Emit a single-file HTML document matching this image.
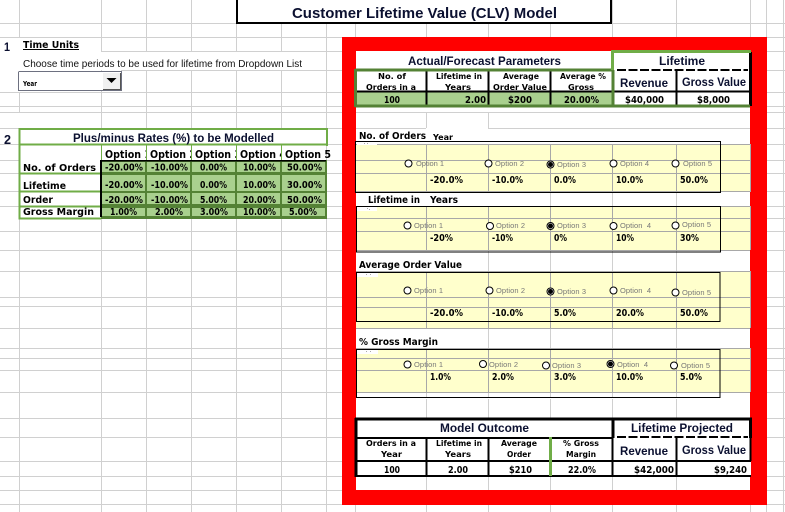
<!DOCTYPE html>
<html><head><meta charset="utf-8"><style>
html,body{margin:0;padding:0;background:#fff}
svg{display:block}
text{white-space:pre}
.t{font-family:"Liberation Sans",sans-serif;font-weight:bold;fill:#0b1030}
.b{font-family:"DejaVu Sans",sans-serif;font-weight:bold;fill:#000;font-size:9px}
.h{font-family:"DejaVu Sans",sans-serif;font-weight:bold;fill:#000;font-size:8px}
.o{font-family:"Liberation Sans",sans-serif;fill:#777;font-size:7.5px}
.g{stroke:#d0d0d0;stroke-width:1;shape-rendering:crispEdges;fill:none}
.y{stroke:#a8a8a8;stroke-width:1;shape-rendering:crispEdges;fill:none}
.r{fill:#fff;stroke:#000;stroke-width:1}
</style></head><body>
<svg xmlns="http://www.w3.org/2000/svg" width="785" height="512" viewBox="0 0 785 512">
<rect width="785" height="512" fill="#fff"/>
<!-- grid -->
<path class="g" d="M0 23.5H785M0 37.5H785M101 51.5H785M121 70.5H785M0 92.5H785M0 106.5H785M0 112.5H785M0 128.5H785M0 144.5H785M0 160.5H785M0 173.5H785M0 191.5H785M0 206.5H785M327 218.5H785M0 231.5H785M0 250.5H785M0 271.5H785M0 297.5H785M0 306.5H785M0 328.5H785M0 348.5H785M0 358.5H785M0 370.5H785M0 392.5H785M0 418.5H785M0 437.5H785M0 461.5H785M0 476.5H785M0 490.5H785M0 504.5H785"/>
<path class="g" d="M19.5 0V37M19.5 92V112M19.5 128V512M101.5 0V512M146.5 0V512M191.5 0V512M236.5 0V512M281.5 0V512M326.5 0V512M355.5 0V512M426.5 0V512M488.5 0V512M550.5 0V512M612.5 0V512M676.5 0V512M750.5 0V512M766.5 0V512M783.5 0V512"/>
<rect x="0" y="38" width="101" height="13" fill="#fff"/>
<rect x="0" y="51" width="19" height="19" fill="#fff"/>
<rect x="0" y="71" width="19" height="21" fill="#fff"/>
<rect x="0" y="113" width="340" height="15" fill="#fff"/>
<path class="g" d="M101.500 113V128M146.500 113V128M191.500 113V128M236.500 113V128M281.500 113V128M326.500 113V128"/>
<rect x="0" y="113" width="19" height="15" fill="#fff"/>
<rect x="20" y="52" width="290" height="18" fill="#fff"/>
<!-- title -->
<rect x="236" y="0" width="376" height="23" fill="#fff"/>
<path d="M237 0V23H611V0" fill="none" stroke="#000" stroke-width="2" shape-rendering="crispEdges"/>
<text class="t" x="292" y="18" font-size="15" textLength="265" lengthAdjust="spacingAndGlyphs">Customer Lifetime Value (CLV) Model</text>
<!-- left top -->
<text class="t" x="4" y="51" font-size="12" textLength="6" lengthAdjust="spacingAndGlyphs">1</text>
<text class="b" x="23" y="48" textLength="56" lengthAdjust="spacingAndGlyphs" style="font-size:10px;text-decoration:underline">Time Units</text>
<text x="23" y="67" font-family="'Liberation Sans',sans-serif" font-size="10" textLength="279" lengthAdjust="spacingAndGlyphs" fill="#111">Choose time periods to be used for lifetime from Dropdown List</text>
<rect x="19" y="72" width="102" height="18" fill="#fff"/>
<path d="M19 71.500H121.500V90.500H18.500V71.500" fill="none" stroke="#6d7080" stroke-width="1" shape-rendering="crispEdges"/>
<rect x="103" y="73" width="17" height="16" fill="#f0f0f0"/>
<path d="M103 89.500H120.500V73" fill="none" stroke="#555" shape-rendering="crispEdges"/>
<path d="M106.500 78H116.500L111.500 83Z" fill="#000"/>
<text class="h" x="23" y="86" textLength="14" lengthAdjust="spacingAndGlyphs" style="font-size:7px">Year</text>
<!-- left table -->
<text class="t" x="4" y="144" font-size="13" textLength="7" lengthAdjust="spacingAndGlyphs">2</text>
<rect x="20" y="130" width="306" height="88" fill="#fff"/>
<rect x="101" y="160" width="226" height="59" fill="#548235"/>
<g fill="#a9d08e"><rect x="102" y="162" width="43" height="10"/><rect x="147" y="162" width="43" height="10"/><rect x="192" y="162" width="43" height="10"/><rect x="237" y="162" width="43" height="10"/><rect x="282" y="162" width="43" height="10"/>
<rect x="102" y="175" width="43" height="16"/><rect x="147" y="175" width="43" height="16"/><rect x="192" y="175" width="43" height="16"/><rect x="237" y="175" width="43" height="16"/><rect x="282" y="175" width="43" height="16"/>
<rect x="102" y="193" width="43" height="11"/><rect x="147" y="193" width="43" height="11"/><rect x="192" y="193" width="43" height="11"/><rect x="237" y="193" width="43" height="11"/><rect x="282" y="193" width="43" height="11"/>
<rect x="102" y="208" width="43" height="8"/><rect x="147" y="208" width="43" height="8"/><rect x="192" y="208" width="43" height="8"/><rect x="237" y="208" width="43" height="8"/><rect x="282" y="208" width="43" height="8"/></g>
<rect x="100" y="160" width="226" height="1.500" fill="#000"/>
<rect x="100" y="160" width="2" height="57" fill="#000"/>
<path d="M327 146V129H19.500V218.500H101M19.500 144.500H327M20 173.500H100M20 191.500H100M20 206.500H100" fill="none" stroke="#70ad47" stroke-width="2" shape-rendering="crispEdges"/>
<path d="M101.500 145V160M146.500 145V160M191.500 145V160M236.500 145V160M281.500 145V160" stroke="#70ad47" stroke-width="1" shape-rendering="crispEdges"/>
<text class="t" x="73" y="142" font-size="11.500" textLength="201" lengthAdjust="spacingAndGlyphs">Plus/minus Rates (%) to be Modelled</text>
<g class="b" style="font-size:10.500px">
<svg x="102" y="146" width="44" height="14"><text x="3" y="12" textLength="46" lengthAdjust="spacingAndGlyphs">Option 1</text></svg>
<svg x="147" y="146" width="44" height="14"><text x="3" y="12" textLength="46" lengthAdjust="spacingAndGlyphs">Option 2</text></svg>
<svg x="192" y="146" width="44" height="14"><text x="3" y="12" textLength="46" lengthAdjust="spacingAndGlyphs">Option 3</text></svg>
<svg x="237" y="146" width="44" height="14"><text x="3" y="12" textLength="46" lengthAdjust="spacingAndGlyphs">Option 4</text></svg>
<text x="285" y="158" textLength="46" lengthAdjust="spacingAndGlyphs">Option 5</text></g>
<g class="b" style="font-size:10px"><text x="23" y="171" textLength="73" lengthAdjust="spacingAndGlyphs">No. of Orders</text><text x="23" y="189" textLength="43" lengthAdjust="spacingAndGlyphs">Lifetime</text><text x="23" y="203" textLength="30" lengthAdjust="spacingAndGlyphs">Order</text><text x="23" y="215" textLength="71" lengthAdjust="spacingAndGlyphs">Gross Margin</text></g>
<g class="b" style="font-size:9.500px">
<text x="105" y="170.500" textLength="38" lengthAdjust="spacingAndGlyphs">-20.00%</text><text x="151" y="170.500" textLength="37" lengthAdjust="spacingAndGlyphs">-10.00%</text><text x="200" y="170.500" textLength="27" lengthAdjust="spacingAndGlyphs">0.00%</text><text x="243" y="170.500" textLength="33" lengthAdjust="spacingAndGlyphs">10.00%</text><text x="287" y="170.500" textLength="35" lengthAdjust="spacingAndGlyphs">50.00%</text>
<text x="105" y="188" textLength="38" lengthAdjust="spacingAndGlyphs">-20.00%</text><text x="151" y="188" textLength="37" lengthAdjust="spacingAndGlyphs">-10.00%</text><text x="200" y="188" textLength="27" lengthAdjust="spacingAndGlyphs">0.00%</text><text x="243" y="188" textLength="33" lengthAdjust="spacingAndGlyphs">10.00%</text><text x="287" y="188" textLength="35" lengthAdjust="spacingAndGlyphs">30.00%</text>
<text x="105" y="203" textLength="38" lengthAdjust="spacingAndGlyphs">-20.00%</text><text x="151" y="203" textLength="37" lengthAdjust="spacingAndGlyphs">-10.00%</text><text x="200" y="203" textLength="27" lengthAdjust="spacingAndGlyphs">5.00%</text><text x="243" y="203" textLength="33" lengthAdjust="spacingAndGlyphs">20.00%</text><text x="287" y="203" textLength="35" lengthAdjust="spacingAndGlyphs">50.00%</text>
<text x="110" y="215" textLength="27" lengthAdjust="spacingAndGlyphs">1.00%</text><text x="155" y="215" textLength="28" lengthAdjust="spacingAndGlyphs">2.00%</text><text x="200" y="215" textLength="28" lengthAdjust="spacingAndGlyphs">3.00%</text><text x="243" y="215" textLength="33" lengthAdjust="spacingAndGlyphs">10.00%</text><text x="289" y="215" textLength="28" lengthAdjust="spacingAndGlyphs">5.00%</text>
</g>
<!-- red frame -->
<path d="M342 37H767V505H342ZM356 51V490H750V51Z" fill="#f00" fill-rule="evenodd"/>
<rect x="356" y="51" width="394" height="61" fill="#fff"/>
<rect x="356" y="113" width="394" height="31" fill="#fff"/>
<rect x="356" y="192" width="394" height="14" fill="#fff"/>
<rect x="356" y="251" width="394" height="20" fill="#fff"/>
<rect x="356" y="329" width="394" height="19" fill="#fff"/>
<rect x="356" y="393" width="394" height="25" fill="#fff"/>
<path class="g" d="M356 112.500H750M356 418.500H750M426.500 112V128M488.500 112V128M356 128.500H426M488 128.500H750
M550.500 192V206M612.500 192V206M676.500 192V206
M488.500 251V271M550.500 251V271M612.500 251V271M676.500 251V271
M488.500 329V348M550.500 329V348M612.500 329V348M676.500 329V348
M426.500 393V418M488.500 393V418M550.500 393V418M612.500 393V418M676.500 393V418"/>
<!-- top table -->
<rect x="355" y="71" width="257" height="35" fill="#fff"/>
<rect x="356" y="92" width="256" height="13" fill="#a9d08e"/>
<path d="M355 91.500H750" stroke="#000" stroke-width="2" shape-rendering="crispEdges"/>
<path d="M426.500 71V105M488.500 71V105M550.500 71V105M676.500 71V105" stroke="#000" stroke-width="2" shape-rendering="crispEdges"/>
<path d="M750.500 52V106" stroke="#000" stroke-width="3" shape-rendering="crispEdges"/>
<path d="M355.500 70H613M355.500 106H750M355.500 69V107M613 70V106" fill="none" stroke="#548235" stroke-width="3" shape-rendering="crispEdges"/>
<path d="M612.500 70V51.500H751" fill="none" stroke="#70ad47" stroke-width="3" shape-rendering="crispEdges"/>
<path d="M617 70H748" stroke="#000" stroke-width="2" stroke-dasharray="9 2.500" shape-rendering="crispEdges"/>
<g class="t" font-size="12"><text x="408" y="65" textLength="153" lengthAdjust="spacingAndGlyphs">Actual/Forecast Parameters</text><text x="659" y="65" textLength="46" lengthAdjust="spacingAndGlyphs">Lifetime</text><text x="620" y="87" textLength="48" lengthAdjust="spacingAndGlyphs">Revenue</text><text x="682" y="86" textLength="64" lengthAdjust="spacingAndGlyphs">Gross Value</text></g>
<g class="h"><text x="378" y="79" textLength="28" lengthAdjust="spacingAndGlyphs">No. of</text><text x="366" y="90" textLength="50" lengthAdjust="spacingAndGlyphs">Orders in a</text><text x="436" y="79" textLength="46" lengthAdjust="spacingAndGlyphs">Lifetime in</text><text x="445" y="90" textLength="26" lengthAdjust="spacingAndGlyphs">Years</text><text x="503" y="79" textLength="36" lengthAdjust="spacingAndGlyphs">Average</text><text x="493" y="90" textLength="54" lengthAdjust="spacingAndGlyphs">Order Value</text><text x="560" y="79" textLength="46" lengthAdjust="spacingAndGlyphs">Average %</text><text x="568" y="90" textLength="26" lengthAdjust="spacingAndGlyphs">Gross</text></g>
<g class="b" style="font-size:9.500px"><text x="384" y="103" textLength="16" lengthAdjust="spacingAndGlyphs">100</text><text x="465" y="103" textLength="21" lengthAdjust="spacingAndGlyphs">2.00</text><text x="508" y="103" textLength="24" lengthAdjust="spacingAndGlyphs">$200</text><text x="564" y="103" textLength="35" lengthAdjust="spacingAndGlyphs">20.00%</text><text x="625" y="103" textLength="39" lengthAdjust="spacingAndGlyphs">$40,000</text><text x="697" y="103" textLength="33" lengthAdjust="spacingAndGlyphs">$8,000</text></g>
<!-- panels -->
<rect x="356" y="144" width="394" height="48" fill="#ffffcc"/>
<rect x="356" y="206" width="394" height="44" fill="#ffffcc"/>
<rect x="356" y="271" width="394" height="57" fill="#ffffcc"/>
<rect x="356" y="348" width="394" height="44" fill="#ffffcc"/>
<path class="y" d="M426.500 144V192M488.500 144V192M550.500 144V192M612.500 144V192M676.500 144V192M750.500 144V192M356 144.500H750M356 160.500H750M356 173.500H750M356 191.500H750
M426.500 206V250M488.500 206V250M550.500 206V250M612.500 206V250M676.500 206V250M750.500 206V250M356 206.500H750M356 218.500H750M356 231.500H750M356 250.500H750
M426.500 271V328M488.500 271V328M550.500 271V328M612.500 271V328M676.500 271V328M750.500 271V328M356 271.500H750M356 297.500H750M356 307.500H750M356 328.500H750
M426.500 348V392M488.500 348V392M550.500 348V392M612.500 348V392M676.500 348V392M750.500 348V392M356 348.500H750M356 358.500H750M356 370.500H750M356 392.500H750"/>
<!-- caption backgrounds -->
<rect x="356" y="113" width="71" height="15" fill="#fff"/>
<path class="g" d="M426.500 112V128"/>
<rect x="357" y="129" width="69" height="12" fill="#fff"/><rect x="427" y="129" width="34" height="12" fill="#fff"/>
<rect x="357" y="193" width="69" height="13" fill="#fff"/><rect x="427" y="193" width="60" height="13" fill="#fff"/>
<rect x="356" y="398" width="365" height="20" fill="#fff"/>
<path class="g" d="M426.500 399V418M488.500 399V418M550.500 399V418M612.500 399V418M676.500 399V418"/>
<!-- panel tabs -->
<g fill="#fff"><rect x="357" y="142" width="20" height="3"/><rect x="357" y="207" width="20" height="4"/><rect x="357" y="273" width="21" height="4"/><rect x="357" y="350" width="21" height="4"/></g>
<g fill="#aaa"><rect x="364" y="143" width="1" height="1"/><rect x="367" y="143" width="1" height="1"/><rect x="367" y="208" width="1" height="1"/><rect x="369" y="209" width="1" height="1"/><rect x="366" y="274" width="1" height="1"/><rect x="370" y="274" width="1" height="1"/><rect x="366" y="351" width="1" height="1"/><rect x="370" y="351" width="1" height="1"/></g>
<g fill="none" stroke="#000" stroke-width="1" shape-rendering="crispEdges"><rect x="355.500" y="141.500" width="365" height="51"/><rect x="356.500" y="206.500" width="364" height="45.500"/><rect x="356.500" y="272.500" width="363.500" height="49"/><rect x="356.500" y="349.500" width="363.500" height="48"/></g>
<g class="b" style="font-size:9.500px"><text x="359" y="139" textLength="67" lengthAdjust="spacingAndGlyphs">No. of Orders</text><text x="368" y="203" textLength="52" lengthAdjust="spacingAndGlyphs">Lifetime in</text><text x="430" y="203" textLength="28" lengthAdjust="spacingAndGlyphs">Years</text><text x="359" y="268" textLength="103" lengthAdjust="spacingAndGlyphs">Average Order Value</text><text x="359" y="345" textLength="79" lengthAdjust="spacingAndGlyphs">% Gross Margin</text></g>
<text class="h" x="433" y="140" textLength="20" lengthAdjust="spacingAndGlyphs">Year</text>
<!-- radios -->
<g class="r"><circle cx="408.500" cy="163.500" r="3.500"/><circle cx="488.500" cy="163.500" r="3.500"/><circle cx="550.500" cy="164.500" r="3.500"/><circle cx="613.500" cy="163.500" r="3.500"/><circle cx="675.500" cy="163.500" r="3.500"/>
<circle cx="407.500" cy="225.500" r="3.500"/><circle cx="490" cy="226" r="3.500"/><circle cx="550.500" cy="226" r="3.500"/><circle cx="613.500" cy="226" r="3.500"/><circle cx="675.500" cy="225.500" r="3.500"/>
<circle cx="407.500" cy="290.500" r="3.500"/><circle cx="489.500" cy="290.500" r="3.500"/><circle cx="550.500" cy="291.500" r="3.500"/><circle cx="613.500" cy="290.500" r="3.500"/><circle cx="675.500" cy="292.500" r="3.500"/>
<circle cx="407.500" cy="364.500" r="3.500"/><circle cx="483" cy="364" r="3.500"/><circle cx="546" cy="365.500" r="3.500"/><circle cx="610.500" cy="364" r="3.500"/><circle cx="674" cy="365.500" r="3.500"/></g>
<g fill="#000"><circle cx="550.500" cy="164.500" r="2.500"/><circle cx="550.500" cy="226" r="2.500"/><circle cx="550.500" cy="291.500" r="2.500"/><circle cx="610.500" cy="364" r="2.500"/></g>
<g class="o"><text x="416" y="166" textLength="28">Option 1</text><text x="495" y="166" textLength="29">Option 2</text><text x="557" y="167" textLength="29">Option 3</text><text x="620" y="166" textLength="29">Option 4</text><text x="683" y="166" textLength="29">Option 5</text>
<text x="414" y="228" textLength="29">Option 1</text><text x="496" y="228" textLength="29">Option 2</text><text x="557" y="228" textLength="29">Option 3</text><text x="620" y="228" textLength="31">Option  4</text><text x="682" y="227" textLength="29">Option 5</text>
<text x="414" y="293" textLength="29">Option 1</text><text x="496" y="293" textLength="29">Option 2</text><text x="557" y="294" textLength="29">Option 3</text><text x="620" y="293" textLength="31">Option  4</text><text x="682" y="295" textLength="29">Option 5</text>
<text x="414" y="367" textLength="29">Option 1</text><text x="489" y="367" textLength="29">Option 2</text><text x="552" y="368" textLength="29">Option 3</text><text x="617" y="367" textLength="31">Option  4</text><text x="681" y="368" textLength="29">Option 5</text></g>
<g class="b" style="font-size:9.500px">
<text x="430" y="183" textLength="33" lengthAdjust="spacingAndGlyphs">-20.0%</text><text x="492" y="183" textLength="31" lengthAdjust="spacingAndGlyphs">-10.0%</text><text x="554" y="183" textLength="22" lengthAdjust="spacingAndGlyphs">0.0%</text><text x="616" y="183" textLength="27" lengthAdjust="spacingAndGlyphs">10.0%</text><text x="680" y="183" textLength="28" lengthAdjust="spacingAndGlyphs">50.0%</text>
<text x="430" y="241" textLength="23" lengthAdjust="spacingAndGlyphs">-20%</text><text x="492" y="241" textLength="21" lengthAdjust="spacingAndGlyphs">-10%</text><text x="554" y="241" textLength="13" lengthAdjust="spacingAndGlyphs">0%</text><text x="616" y="241" textLength="18" lengthAdjust="spacingAndGlyphs">10%</text><text x="680" y="241" textLength="19" lengthAdjust="spacingAndGlyphs">30%</text>
<text x="430" y="316" textLength="33" lengthAdjust="spacingAndGlyphs">-20.0%</text><text x="492" y="316" textLength="31" lengthAdjust="spacingAndGlyphs">-10.0%</text><text x="554" y="316" textLength="22" lengthAdjust="spacingAndGlyphs">5.0%</text><text x="616" y="316" textLength="28" lengthAdjust="spacingAndGlyphs">20.0%</text><text x="680" y="316" textLength="28" lengthAdjust="spacingAndGlyphs">50.0%</text>
<text x="430" y="380" textLength="21" lengthAdjust="spacingAndGlyphs">1.0%</text><text x="492" y="380" textLength="22" lengthAdjust="spacingAndGlyphs">2.0%</text><text x="554" y="380" textLength="22" lengthAdjust="spacingAndGlyphs">3.0%</text><text x="616" y="380" textLength="27" lengthAdjust="spacingAndGlyphs">10.0%</text><text x="680" y="380" textLength="22" lengthAdjust="spacingAndGlyphs">5.0%</text>
</g>
<!-- bottom table -->
<rect x="356" y="419" width="395" height="57" fill="#fff"/>
<path d="M355 438H612M355 461H751M355 476H751" stroke="#000" stroke-width="2" shape-rendering="crispEdges"/>
<path d="M355 419H752M356 418V477M750.500 418V438M613 418V438" fill="none" stroke="#000" stroke-width="3" shape-rendering="crispEdges"/>
<path d="M426.500 437V476M488.500 437V476M612.500 437V476M676.500 437V476M750.500 437V461" stroke="#000" stroke-width="2" shape-rendering="crispEdges"/>
<path d="M550.500 437V476" stroke="#70ad47" stroke-width="3" shape-rendering="crispEdges"/>
<path d="M617 437H748" stroke="#000" stroke-width="2" stroke-dasharray="9 2.500" shape-rendering="crispEdges"/>
<g class="t" font-size="12"><text x="440" y="432" textLength="89" lengthAdjust="spacingAndGlyphs">Model Outcome</text><text x="631" y="432" textLength="102" lengthAdjust="spacingAndGlyphs">Lifetime Projected</text><text x="620" y="455" textLength="48" lengthAdjust="spacingAndGlyphs">Revenue</text><text x="682" y="454" textLength="64" lengthAdjust="spacingAndGlyphs">Gross Value</text></g>
<g class="h"><text x="366" y="446" textLength="50" lengthAdjust="spacingAndGlyphs">Orders in a</text><text x="381" y="457" textLength="21" lengthAdjust="spacingAndGlyphs">Year</text><text x="436" y="446" textLength="46" lengthAdjust="spacingAndGlyphs">Lifetime in</text><text x="445" y="457" textLength="26" lengthAdjust="spacingAndGlyphs">Years</text><text x="501" y="446" textLength="36" lengthAdjust="spacingAndGlyphs">Average</text><text x="507" y="457" textLength="24" lengthAdjust="spacingAndGlyphs">Order</text><text x="563" y="446" textLength="36" lengthAdjust="spacingAndGlyphs">% Gross</text><text x="566" y="457" textLength="30" lengthAdjust="spacingAndGlyphs">Margin</text></g>
<g class="b" style="font-size:9.500px"><text x="384" y="473" textLength="16" lengthAdjust="spacingAndGlyphs">100</text><text x="448" y="473" textLength="20" lengthAdjust="spacingAndGlyphs">2.00</text><text x="509" y="473" textLength="23" lengthAdjust="spacingAndGlyphs">$210</text><text x="568" y="473" textLength="28" lengthAdjust="spacingAndGlyphs">22.0%</text><text x="634" y="473" textLength="40" lengthAdjust="spacingAndGlyphs">$42,000</text><text x="714" y="473" textLength="33" lengthAdjust="spacingAndGlyphs">$9,240</text></g>
</svg>
</body></html>
